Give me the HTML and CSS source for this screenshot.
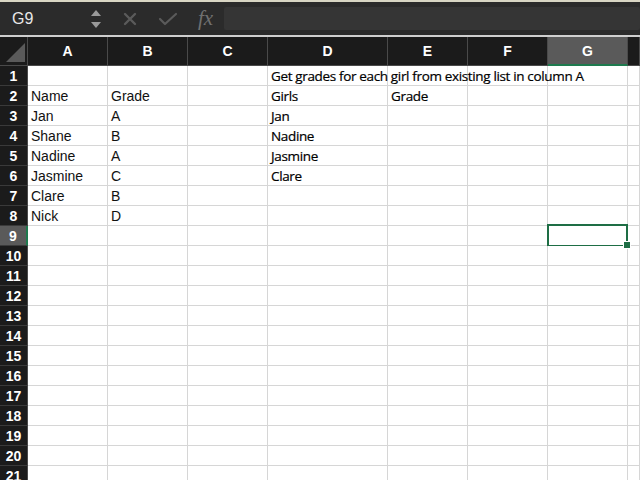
FILE: index.html
```html
<!DOCTYPE html>
<html>
<head>
<meta charset="utf-8">
<link rel="stylesheet" href="styles.css">
</head>
<body>
<div class="app">
  <div class="formula-bar">
    <div class="name-box">
      <span class="name">G9</span>
      <svg class="spin" width="12" height="24" viewBox="0 0 12 24"><path d="M6 3 L11 9 L1 9 Z" fill="#9a9a9a"/><path d="M1 15 L11 15 L6 21 Z" fill="#9a9a9a"/></svg>
    </div>
    <div class="fx-tools">
      <svg width="16" height="16" viewBox="0 0 16 16"><path d="M3 3 L13 13 M13 3 L3 13" stroke="#5a5a5a" stroke-width="2.4" stroke-linecap="round"/></svg>
      <svg width="20" height="16" viewBox="0 0 20 16"><path d="M2 8 L7 13 L18 3" stroke="#5a5a5a" stroke-width="2.2" fill="none" stroke-linecap="round" stroke-linejoin="round"/></svg>
      <span class="fx">fx</span>
    </div>
    <div class="formula-input"></div>
  </div>
  <div class="sep"></div>
  <div class="grid" id="grid"></div>
</div>
<script>
const cols = ['A','B','C','D','E','F','G',''];
const data = {
  '1': {D:'Get grades for each girl from existing list in column A'},
  '2': {A:'Name',B:'Grade',D:'Girls',E:'Grade'},
  '3': {A:'Jan',B:'A',D:'Jan'},
  '4': {A:'Shane',B:'B',D:'Nadine'},
  '5': {A:'Nadine',B:'A',D:'Jasmine'},
  '6': {A:'Jasmine',B:'C',D:'Clare'},
  '7': {A:'Clare',B:'B'},
  '8': {A:'Nick',B:'D'}
};
const g = document.getElementById('grid');
let h = '<div class="corner"><span class="tri"></span></div>';
cols.forEach(c => { h += '<div class="ch' + (c==='G'?' sel':'') + '">' + c + '</div>'; });
for (let r = 1; r <= 21; r++) {
  h += '<div class="rh' + (r===9?' sel':'') + '">' + r + '</div>';
  cols.forEach(c => {
    let cls = 'cell';
    if (c === 'D') cls += ' aptos spill';
    if (c === 'E') cls += ' aptos';
    if (c === 'G' && r === 9) cls += ' active';
    const t = (data[r] && data[r][c]) || '';
    h += '<div class="' + cls + '">' + t + '</div>';
  });
}
g.innerHTML = h;
</script>
</body>
</html>
```

FILE: styles.css
```css
* { box-sizing: border-box; }
html, body { margin: 0; padding: 0; background: #ffffff; }
body { width: 640px; height: 480px; overflow: hidden; font-family: "Liberation Sans", Arial, sans-serif; }
.app { display: flex; flex-direction: column; }
.formula-bar {
  height: 35px;
  background: #2b2b2b;
  border-top: 2px solid #d9d6c4;
  display: flex;
  align-items: center;
}
.name-box {
  width: 110px;
  display: flex;
  align-items: center;
  justify-content: space-between;
  padding: 0 8px 0 12px;
}
.name { color: #e8e8e8; font-size: 16px; }
.fx-tools {
  display: flex;
  align-items: center;
  gap: 20px;
  padding-left: 12px;
  width: 114px;
}
.fx { color: #707070; font-family: "Liberation Serif", serif; font-style: italic; font-size: 21px; line-height: 1; }
.formula-input { flex: 1; height: 23px; background: #353535; border-radius: 2px; }
.sep { height: 2px; background: #cfcfcf; }
.grid {
  display: grid;
  grid-template-columns: 28px 80px 80px 80px 120px 80px 80px 80px 12px;
  grid-template-rows: 29px repeat(21, 20px);
}
.corner {
  background: #1b1b1b;
  border-right: 1px solid #4a4a4a;
  border-bottom: 1px solid #4a4a4a;
  position: relative;
}
.tri {
  position: absolute; right: 2px; bottom: 3px;
  width: 0; height: 0;
  border-left: 19px solid transparent;
  border-bottom: 19px solid #5a5a5a;
}
.ch {
  background: #1b1b1b;
  color: #ffffff;
  font-weight: bold;
  font-size: 14px;
  display: flex; align-items: center; justify-content: center;
  border-right: 1px solid #4a4a4a;
  border-bottom: 1px solid #4a4a4a;
}
.ch.sel { background: #5a5a5a; border-bottom: 2px solid #1e7a4e; }
.rh {
  background: #1b1b1b;
  color: #ffffff;
  font-weight: bold;
  font-size: 14px;
  display: flex; align-items: center; justify-content: center;
  border-right: 1px solid #4a4a4a;
  border-bottom: 1px solid #3a3a3a;
  padding-top: 1px;
}
.rh.sel { background: #5a5a5a; border-right: 2px solid #1e7a4e; }
.cell {
  background: #ffffff;
  border-right: 1px solid #d6d6d6;
  border-bottom: 1px solid #d6d6d6;
  color: #111111;
  font-size: 14px;
  padding: 2px 0 0 3px;
  white-space: nowrap;
  line-height: 17px;
  position: relative;
}
.cell.aptos { font-family: "Open Sans", sans-serif; font-size: 13.5px; letter-spacing: -0.35px; color: #000000; -webkit-text-stroke: 0.2px #000; }
.cell.spill { z-index: 2; background: transparent; }
.active::after {
  content: "";
  position: absolute;
  left: -1px; top: -2px; right: -1px; bottom: -2px;
  border: 2px solid #1e6e45;
}
.active::before {
  content: "";
  position: absolute;
  right: -4px; bottom: -4px;
  width: 6px; height: 6px;
  background: #1e6e45;
  border: 1px solid #fff;
  z-index: 2;
}
```
